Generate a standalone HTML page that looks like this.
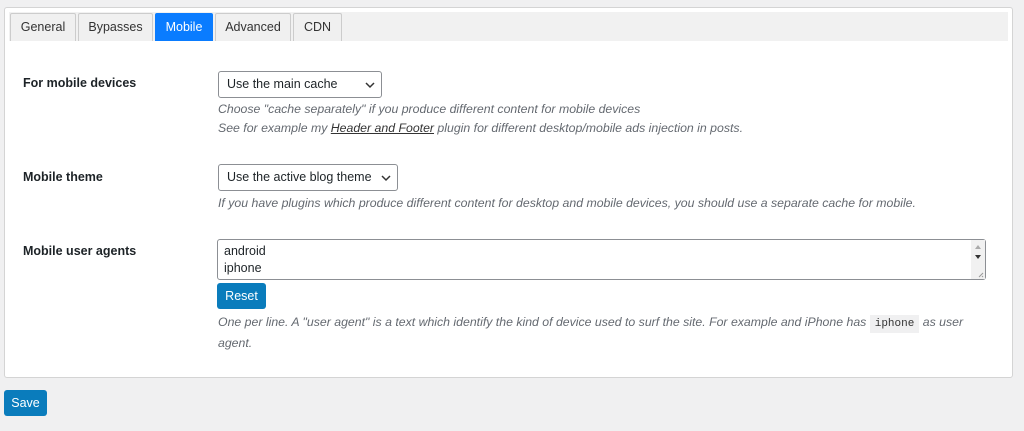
<!DOCTYPE html>
<html><head><style>
*{box-sizing:border-box;margin:0;padding:0}
body{width:1024px;height:431px;background:#f0f0f1;font-family:"Liberation Sans",sans-serif;font-size:13px;color:#1d2327;position:relative;overflow:hidden}
.panel{position:absolute;left:4px;top:7px;width:1009px;height:371px;background:#fff;border:1px solid #d4d4d4;border-radius:3px}
.band{position:absolute;left:4px;top:4px;right:4px;height:29px;background:#f1f1f1}
.tab{position:absolute;top:5px;height:28px;border:1px solid #ccc;border-bottom:none;background:#f0f0f0;color:#333;line-height:26px;text-align:center;font-size:12.5px;border-radius:2px 2px 0 0}
.tab.on{background:#0a7cff;color:#fff;border-color:#0a7cff}
.abs{position:absolute}
.lbl{font-weight:bold;font-size:12.5px}
.sel{position:absolute;border:1px solid #8c8f94;border-radius:3px;height:27px;line-height:25px;padding-left:8px;font-size:12.5px;background:#fff}
.sel svg{position:absolute;right:6px;top:9px}
.desc{position:absolute;font-style:italic;color:#646970;font-size:12.3px;line-height:19px}
.btn{position:absolute;background:#0a7cbc;color:#fff;border-radius:3px;text-align:center;font-size:12.5px}
code{background:#f0f0f1;font-family:"Liberation Mono",monospace;font-style:normal;font-size:11px;padding:3px 5px;color:#333}
</style></head><body>
<div class="panel">
<div class="band"></div>
<div class="tab" style="left:5px;width:66px">General</div>
<div class="tab" style="left:73px;width:75px">Bypasses</div>
<div class="tab on" style="left:150px;width:58px">Mobile</div>
<div class="tab" style="left:210px;width:76px">Advanced</div>
<div class="tab" style="left:288px;width:49px">CDN</div>
</div>
<div class="abs lbl" style="left:23px;top:76px">For mobile devices</div>
<div class="sel" style="left:218px;top:71px;width:164px">Use the main cache<svg width="10" height="8"><path d="M1 2l4 4 4-4" stroke="#333" stroke-width="1.5" fill="none"/></svg></div>
<div class="desc" style="left:218px;top:100px">Choose "cache separately" if you produce different content for mobile devices<br>See for example my <u style="color:#333">Header and Footer</u> plugin for different desktop/mobile ads injection in posts.</div>
<div class="abs lbl" style="left:23px;top:170px">Mobile theme</div>
<div class="sel" style="left:218px;top:164px;width:180px">Use the active blog theme<svg width="10" height="8"><path d="M1 2l4 4 4-4" stroke="#333" stroke-width="1.5" fill="none"/></svg></div>
<div class="desc" style="left:218px;top:194px">If you have plugins which produce different content for desktop and mobile devices, you should use a separate cache for mobile.</div>
<div class="abs lbl" style="left:23px;top:244px">Mobile user agents</div>
<div class="abs" style="left:217px;top:239px;width:769px;height:41px;border:1px solid #8c8f94;border-radius:3px;padding:3px 6px;line-height:17px;font-size:12.5px">android<br>iphone
<div class="abs" style="right:0;top:0;width:14px;height:39px;background:#f1f1f1"><svg width="14" height="39"><path d="M4 9l3-4 3 4z" fill="#aaa"/><path d="M4 15l3 4 3-4z" fill="#333"/><path d="M12 33l-4 4M12 36l-1 1" stroke="#999"/></svg></div></div>
<div class="btn" style="left:217px;top:283px;width:49px;height:26px;line-height:26px">Reset</div>
<div class="desc" style="left:218px;top:313px;width:760px">One per line. A "user agent" is a text which identify the kind of device used to surf the site. For example and iPhone has <code>iphone</code> as user agent.</div>
<div class="btn" style="left:4px;top:390px;width:43px;height:26px;line-height:26px">Save</div>
</body></html>
